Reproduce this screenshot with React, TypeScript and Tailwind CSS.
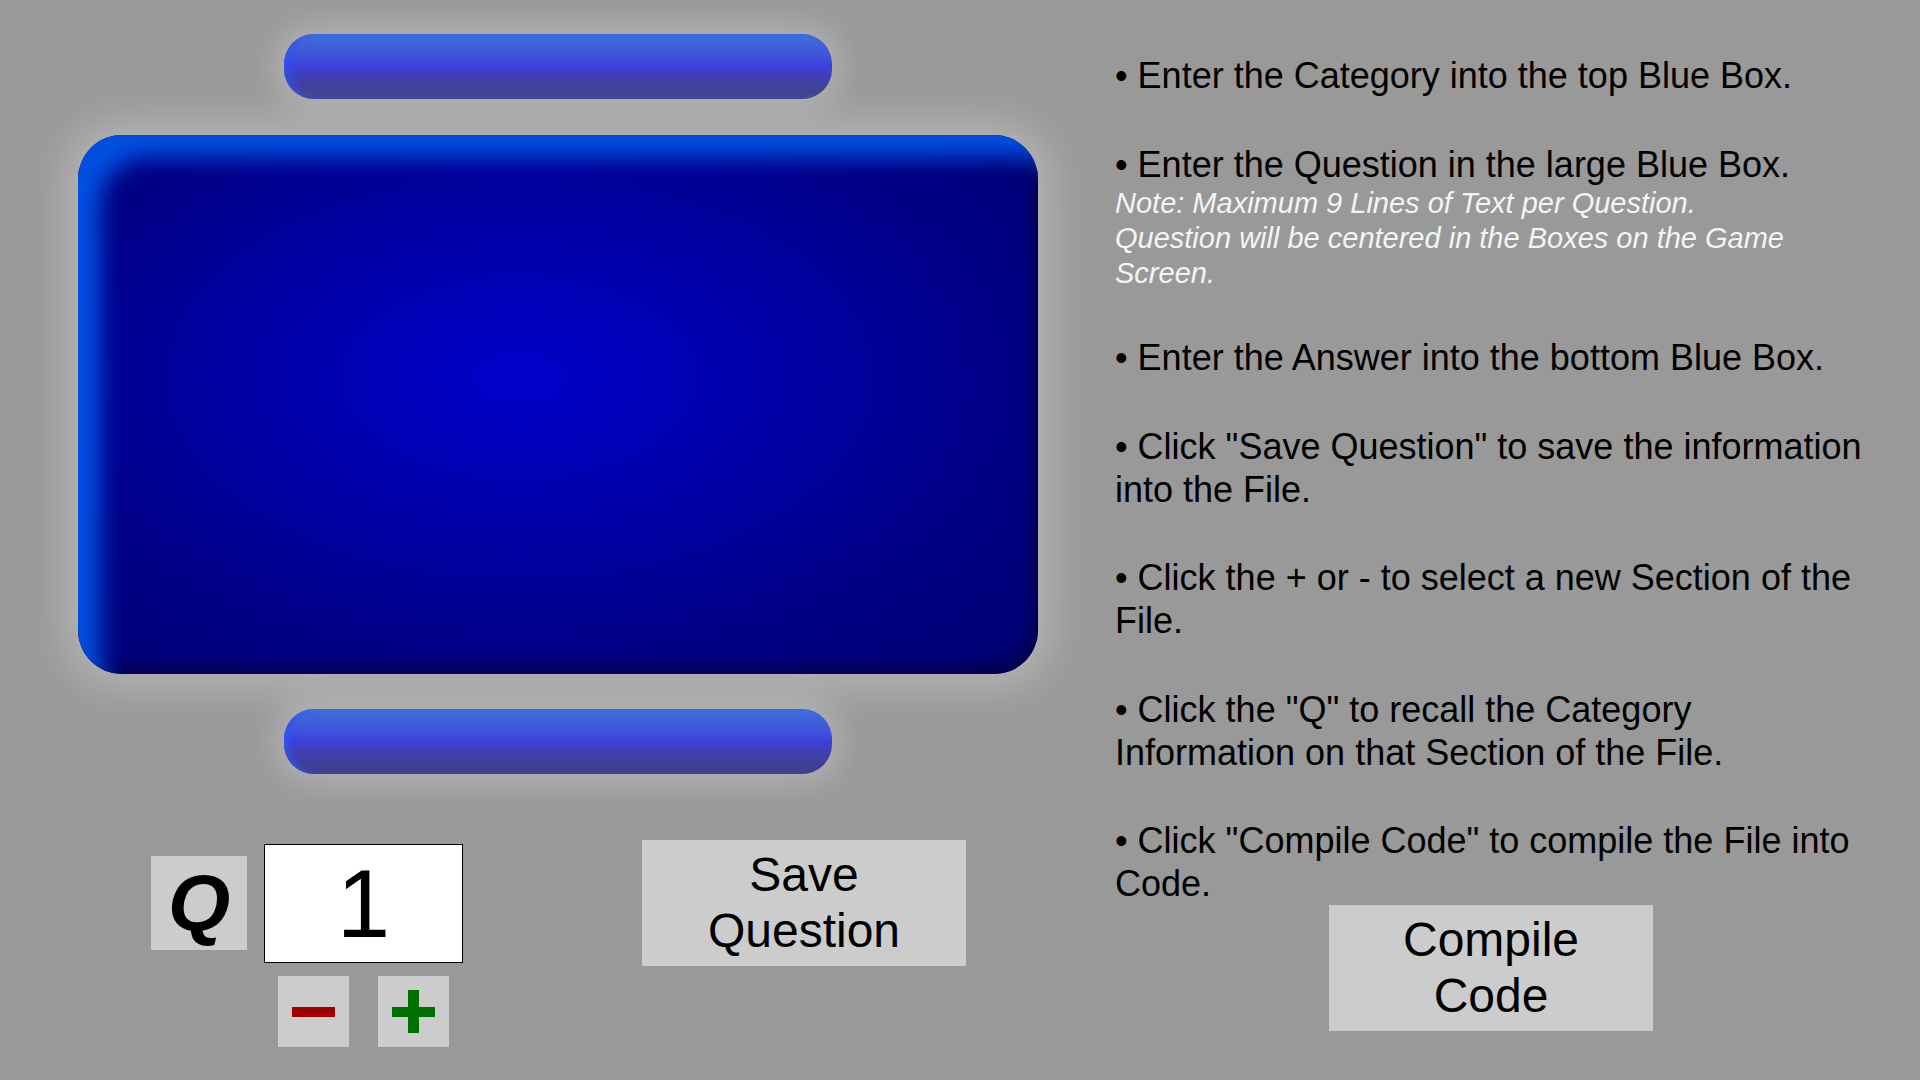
const FONT = { fontFamily: '"Liberation Sans", Arial, sans-serif' };

const STEPS: { text: string; note?: string[] }[] = [
  { text: "• Enter the Category into the top Blue Box." },
  {
    text: "• Enter the Question in the large Blue Box.",
    note: [
      "Note: Maximum 9 Lines of Text per Question.",
      "Question will be centered in the Boxes on the Game Screen.",
    ],
  },
  { text: "• Enter the Answer into the bottom Blue Box." },
  { text: '• Click "Save Question" to save the information into the File.' },
  { text: "• Click the + or - to select a new Section of the File." },
  { text: '• Click the "Q" to recall the Category Information on that Section of the File.' },
  { text: '• Click "Compile Code" to compile the File into Code.' },
];

function Bar() {
  return (
    <div className="h-[65px] w-[548px] rounded-[30px] bg-[linear-gradient(to_bottom,#3f70d9_0%,#3f52dc_35%,#3f3fdb_50%,#3f3fa0_75%,#3f3f88_100%)] shadow-[0_0_30px_12px_rgba(255,255,255,0.22),inset_8px_0_10px_-4px_#2f55f0]" />
  );
}

function GrayButton({ lines }: { lines: [string, string] }) {
  return (
    <button className="flex h-[126px] w-[324px] flex-col items-center justify-center bg-[#cccccc] text-[48px] leading-[56px] text-black">
      <span>{lines[0]}</span>
      <span>{lines[1]}</span>
    </button>
  );
}

export default function App() {
  return (
    <div className="flex h-[1080px] w-[1920px] overflow-hidden bg-[#999999]" style={FONT}>
      {/* editor side */}
      <div className="flex w-[1115px] flex-col items-center pt-[34px]">
        <Bar />
        <div className="mt-[36px] h-[539px] w-[960px] rounded-[44px] bg-[radial-gradient(ellipse_at_46%_45%,#0000cc_0%,#0000a8_35%,#000088_65%,#000070_100%)] shadow-[0_0_40px_16px_rgba(255,255,255,0.25),inset_26px_26px_22px_-4px_#0050e0,inset_-6px_-8px_14px_#000050]" />
        <div className="mt-[35px]">
          <Bar />
        </div>

        <div className="mt-[66px] flex w-full items-start pl-[151px]">
          <button className="mt-[16px] flex h-[94px] w-[96px] items-center justify-center bg-[#cccccc] text-[80px] font-bold italic leading-none text-black">
            Q
          </button>
          <div className="ml-[17px] mt-[4px] flex flex-col items-center">
            <div className="flex h-[119px] w-[199px] items-center justify-center border-[1.5px] border-black bg-white text-[96px] leading-none text-black">
              1
            </div>
            <div className="mt-[13px] flex gap-[29px]">
              <button className="flex h-[71px] w-[71px] items-center justify-center bg-[#cccccc]">
                <span className="block h-[10px] w-[43px] bg-[#a00000]" />
              </button>
              <button className="relative flex h-[71px] w-[71px] items-center justify-center bg-[#cccccc]">
                <span className="block h-[10px] w-[43px] bg-[#007000]" />
                <span className="absolute h-[43px] w-[11px] bg-[#007000]" />
              </button>
            </div>
          </div>
          <div className="ml-[179px]">
            <GrayButton lines={["Save", "Question"]} />
          </div>
        </div>
      </div>

      {/* instructions */}
      <div className="flex w-[755px] flex-col pt-[54px]">
        <div className="flex flex-col gap-[45.5px]">
          {STEPS.map((step) => (
            <div key={step.text}>
              <p className="text-[36px] leading-[43px] text-black">{step.text}</p>
              {step.note && (
                <p className="text-[29px] italic leading-[35px] text-[#f4f4f4]">
                  {step.note[0]}
                  <br />
                  {step.note[1]}
                </p>
              )}
            </div>
          ))}
        </div>
        <div className="-ml-[3px] self-center">
          <GrayButton lines={["Compile", "Code"]} />
        </div>
      </div>
    </div>
  );
}
